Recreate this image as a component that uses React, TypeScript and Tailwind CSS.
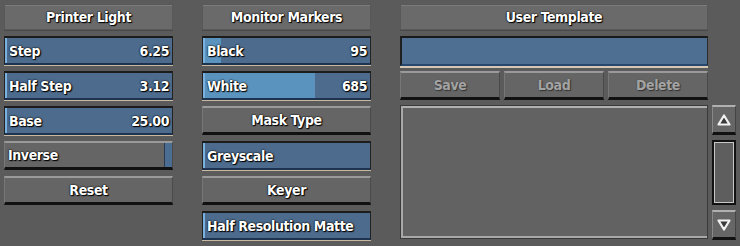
import React from 'react';

const txt = "font-bold text-white text-[14px] leading-none tracking-[-0.4px] whitespace-nowrap [text-shadow:0_0_1px_#000,0_0_2px_#000,1px_1px_1px_#000]";

const Header = ({ label }: { label: string }) => (
  <div className={`h-[26px] flex items-center justify-center bg-[#6a6a6a] border border-[#585858] shadow-[inset_0_1px_0_#7c7c7c,0_1px_0_#4a4a4a] ${txt}`}>
    {label}
  </div>
);

const Field = ({ label, value, fill }: { label: string; value?: string; fill?: number }) => (
  <div className="relative h-[29px] bg-[#4c6b8d] border-t-2 border-t-[#1c1c1c] border-l border-l-[#222] border-r border-r-[#222] shadow-[0_1px_0_#c8b8a0] border-b-2 border-b-[#1e3350] overflow-hidden">
    {fill !== undefined && (
      <div className="absolute left-0 top-0 bottom-0 bg-[#5a93bd]" style={{ width: `${fill}%` }} />
    )}
    <div className="absolute left-0 top-0 bottom-0 w-[2px] bg-[#79b2e0]" />
    <div className={`relative h-full flex items-center justify-between pl-[4px] pr-[3px] ${txt}`}>
      <span>{label}</span>
      {value && <span>{value}</span>}
    </div>
  </div>
);

const Button = ({ label, disabled, align = 'center', right }: { label: string; disabled?: boolean; align?: 'center' | 'left'; right?: boolean }) => (
  <div className="relative h-[29px] bg-[#656565] border-t-2 border-t-[#9a9a9a] border-l border-l-[#777] border-r border-r-[#4a4a4a] border-b-[3px] border-b-[#111] overflow-hidden">
    {right && <div className="absolute right-0 top-0 bottom-0 w-[8px] bg-[#4c6d92] border-l border-l-[#2a3a50]" />}
    <div
      className={`relative h-full flex items-center ${align === 'center' ? 'justify-center' : 'justify-start pl-[3px]'} ${
        disabled ? 'font-bold text-[#a3a3a3] text-[14px] leading-none tracking-[-0.4px] [text-shadow:0_0_1px_#3a3a3a,1px_1px_1px_#333]' : txt
      }`}
    >
      {label}
    </div>
  </div>
);

const Arrow = ({ up }: { up?: boolean }) => (
  <svg width="14" height="12" viewBox="0 0 14 12">
    <polygon
      points={up ? '7,1.5 12.5,10.5 1.5,10.5' : '1.5,1.5 12.5,1.5 7,10.5'}
      fill="#3a3a3a"
      stroke="#f2f2f2"
      strokeWidth="2.2"
      strokeLinejoin="round"
    />
  </svg>
);

export default function App() {
  return (
    <div
      className="w-[740px] h-[246px] bg-[#5b5b5b] flex pt-[4px] pl-[4px] overflow-hidden"
      style={{ fontFamily: '"DejaVu Sans Condensed", "DejaVu Sans", "Liberation Sans", sans-serif' }}
    >
      <div className="w-[169px] flex flex-col gap-[6px]">
        <Header label="Printer Light" />
        <Field label="Step" value="6.25" />
        <Field label="Half Step" value="3.12" />
        <Field label="Base" value="25.00" />
        <Button label="Inverse" align="left" right />
        <Button label="Reset" />
      </div>

      <div className="w-[169px] ml-[29px] flex flex-col gap-[6px]">
        <Header label="Monitor Markers" />
        <Field label="Black" value="95" fill={11} />
        <Field label="White" value="685" fill={67} />
        <Button label="Mask Type" />
        <Field label="Greyscale" />
        <Button label="Keyer" />
        <Field label="Half Resolution Matte" />
      </div>

      <div className="w-[308px] ml-[29px] flex flex-col">
        <Header label="User Template" />
        <div className="mt-[6px] h-[30px] bg-[#4f6f92] border-t-2 border-t-[#1a1a1a] border-l-2 border-l-[#1f1f1f] border-r border-r-[#2a2a2a] border-b-2 border-b-[#27476e] shadow-[0_2px_0_#d6c8b4]" />
        <div className="mt-[5px] flex gap-[4px]">
          <div className="flex-1"><Button label="Save" disabled /></div>
          <div className="flex-1"><Button label="Load" disabled /></div>
          <div className="flex-1"><Button label="Delete" disabled /></div>
        </div>
        <div className="mt-[5px] h-[134px] bg-[#626262] border border-[#3a3a3a] shadow-[inset_2px_0_0_#a8a8a8,inset_0_-2px_0_#a8a8a8,inset_0_2px_0_#b0b0b0]" />
      </div>

      <div className="w-[24px] ml-[4px] mt-[101px] flex flex-col gap-[5px]">
        <div className="h-[30px] flex items-center justify-center bg-[#666] border-t-2 border-t-[#b0b0b0] border-l border-l-[#888] border-r border-r-[#444] border-b-[3px] border-b-[#111]">
          <Arrow up />
        </div>
        <div className="h-[65px] bg-[#5e5e5e] border-2 border-[#111] shadow-[inset_1px_1px_0_#c8c8c8,inset_-1px_-1px_0_#c8c8c8]" />
        <div className="h-[30px] flex items-center justify-center bg-[#666] border-t-2 border-t-[#b0b0b0] border-l border-l-[#888] border-r border-r-[#444] border-b-[3px] border-b-[#111]">
          <Arrow />
        </div>
      </div>
    </div>
  );
}
